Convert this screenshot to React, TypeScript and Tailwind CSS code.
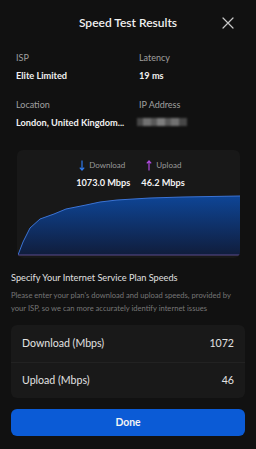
import React from 'react';

const points: [number, number][] = [
  [0, 59], [5, 46], [12, 32], [22, 23], [36, 18], [48, 13], [58, 11], [68, 9],
  [82, 6], [99, 4], [132, 2], [165, 1], [222, 0],
];

const SpeedChart: React.FC = () => {
  const line = points.map(([x, y], i) => `${i === 0 ? 'M' : 'L'}${x} ${y + 1}`).join(' ');
  const area = `${line} L222 60 L0 60 Z`;
  return (
    <svg width="222" height="61" viewBox="0 0 222 61" className="block">
      <defs>
        <linearGradient id="fill" x1="0" y1="0" x2="0" y2="1">
          <stop offset="0%" stopColor="#0e4596" />
          <stop offset="100%" stopColor="#101d3c" />
        </linearGradient>
      </defs>
      <path d={area} fill="url(#fill)" />
      <path d={line} fill="none" stroke="#3b73d4" strokeWidth="1" />
      <line x1="0" y1="60" x2="222" y2="60" stroke="#5a4a8c" strokeWidth="1.2" />
    </svg>
  );
};

const App: React.FC = () => {
  return (
    <div className="w-[256px] h-[449px] bg-[#111111] text-white overflow-hidden" style={{ fontFamily: 'Lato, "Noto Sans", sans-serif' }}>
      {/* Header */}
      <div className="relative h-[46px] flex items-center justify-center">
        <h1 className="text-[12px] font-semibold text-[#f0f0f0]">Speed Test Results</h1>
        <button className="absolute right-[21px] top-[16px] w-[14px] h-[14px] flex items-center justify-center">
          <svg width="12" height="12" viewBox="0 0 12 12">
            <path d="M1 1 L11 11 M11 1 L1 11" stroke="#c8c8c8" strokeWidth="1.2" strokeLinecap="round" />
          </svg>
        </button>
      </div>

      {/* Info grid */}
      <div className="grid grid-cols-[123px_1fr] pl-[16px] pt-[4.5px] gap-y-[16px]">
        <div className="flex flex-col gap-[5px]">
          <span className="text-[9px] text-[#a0a0a0] leading-[13px]">ISP</span>
          <span className="text-[9.2px] font-bold text-[#f0f0f0] leading-[13px]">Elite Limited</span>
        </div>
        <div className="flex flex-col gap-[5px]">
          <span className="text-[9px] text-[#a0a0a0] leading-[13px]">Latency</span>
          <span className="text-[9.2px] font-bold text-[#f0f0f0] leading-[13px]">19 ms</span>
        </div>
        <div className="flex flex-col gap-[5px]">
          <span className="text-[9px] text-[#a0a0a0] leading-[13px]">Location</span>
          <span className="text-[9.2px] font-bold text-[#f0f0f0] leading-[13px] whitespace-nowrap">London, United Kingdom...</span>
        </div>
        <div className="flex flex-col gap-[5px]">
          <span className="text-[9px] text-[#a0a0a0] leading-[13px]">IP Address</span>
          <div className="h-[13px] flex items-center">
            <div className="flex h-[8px] w-[50px] blur-[1.2px] opacity-80 -ml-[2px]">
              <div className="w-[6px] bg-[#555]" />
              <div className="w-[8px] bg-[#8a8a8a]" />
              <div className="w-[6px] bg-[#6a6a6a]" />
              <div className="w-[8px] bg-[#9a9a9a]" />
              <div className="w-[6px] bg-[#6a6a6a]" />
              <div className="w-[8px] bg-[#8a8a8a]" />
              <div className="w-[8px] bg-[#555]" />
            </div>
          </div>
        </div>
      </div>

      {/* Chart card */}
      <div className="ml-[17px] mr-[16px] mt-[21.5px] h-[108px] rounded-[6px] bg-[#181818] flex flex-col overflow-hidden">
        <div className="flex justify-center gap-[11px] pt-[9px] pl-[4px]">
          <div className="flex flex-col items-start">
            <div className="flex items-center gap-[4px] h-[12px] pl-[3px]">
              <svg width="6" height="11" viewBox="0 0 6 11">
                <path d="M3 0.5 V10 M0.8 7.6 L3 10 L5.2 7.6" fill="none" stroke="#2f7bf0" strokeWidth="1.2" />
              </svg>
              <span className="text-[8px] text-[#9a9a9a]">Download</span>
            </div>
            <span className="text-[9.2px] font-bold text-[#f2f2f2] mt-[4.5px] leading-[13px]">1073.0 Mbps</span>
          </div>
          <div className="flex flex-col items-start">
            <div className="flex items-center gap-[4px] h-[12px] pl-[5px]">
              <svg width="6" height="11" viewBox="0 0 6 11">
                <path d="M3 10.5 V1 M0.8 3.4 L3 1 L5.2 3.4" fill="none" stroke="#b04ae0" strokeWidth="1.2" />
              </svg>
              <span className="text-[8px] text-[#9a9a9a]">Upload</span>
            </div>
            <span className="text-[9.2px] font-bold text-[#f2f2f2] mt-[4.5px] leading-[13px]">46.2 Mbps</span>
          </div>
        </div>
        <div className="mt-auto pl-[1px] pb-[2px]">
          <SpeedChart />
        </div>
      </div>

      {/* Plan speeds */}
      <div className="px-[11px] pt-[13px]">
        <h2 className="text-[9.2px] text-[#e0e0e0] leading-[14px]">Specify Your Internet Service Plan Speeds</h2>
        <p className="text-[7.6px] text-[#767676] leading-[13px] mt-[3.5px] pr-[6px]">
          Please enter your plan's download and upload speeds, provided by your ISP, so we can more accurately identify internet issues
        </p>

        <div className="mt-[10.5px] rounded-[6px] bg-[#191919] flex flex-col">
          <div className="h-[38px] flex items-center justify-between px-[11px] border-b border-[#222]">
            <span className="text-[10.6px] text-[#e2e2e2]">Download (Mbps)</span>
            <span className="text-[10.6px] text-[#e2e2e2]">1072</span>
          </div>
          <div className="h-[35px] flex items-center justify-between px-[11px]">
            <span className="text-[10.6px] text-[#e2e2e2]">Upload (Mbps)</span>
            <span className="text-[10.6px] text-[#e2e2e2]">46</span>
          </div>
        </div>

        <button className="mt-[11px] w-full h-[27px] rounded-[6px] bg-[#0b5bd6] text-[10.4px] font-bold text-[#f4f4f4]">
          Done
        </button>
      </div>
    </div>
  );
};

export default App;
